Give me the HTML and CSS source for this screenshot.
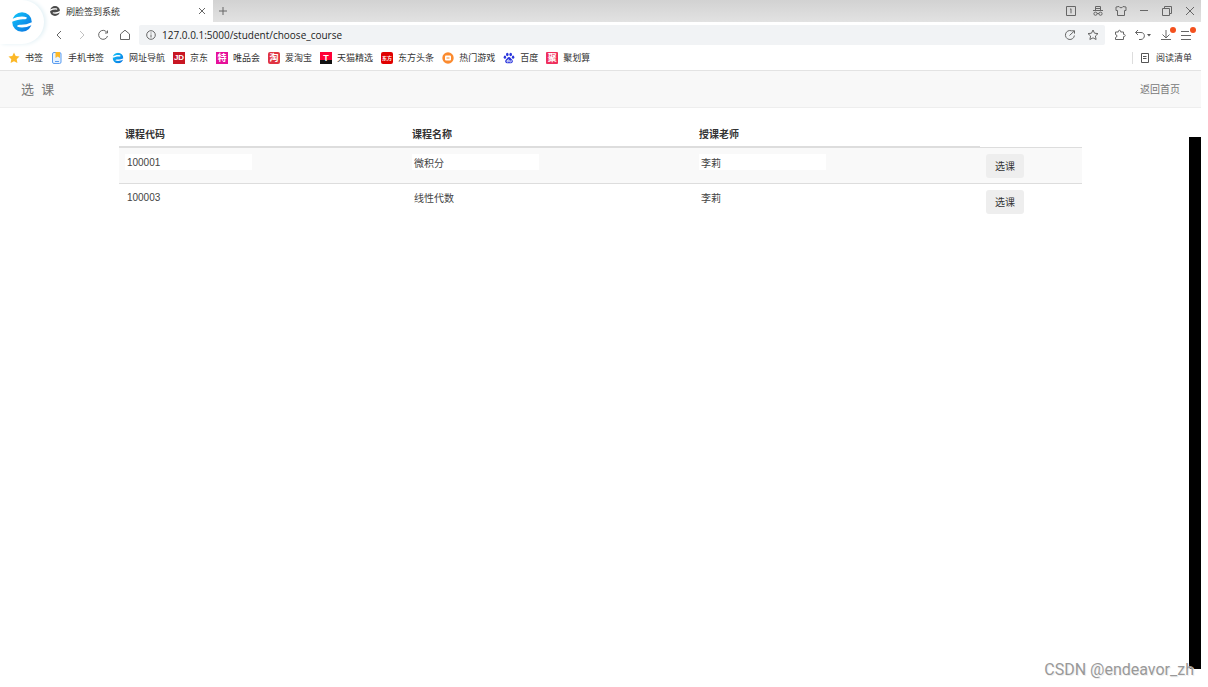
FILE: index.html
```html
<!DOCTYPE html>
<html lang="zh-CN">
<head>
    <meta charset="UTF-8">
    <meta name="viewport" content="width=device-width, initial-scale=1.0">
    <title>刷脸签到系统</title>
    <link rel="stylesheet" href="styles.css">
</head>
<body>
    <!-- shared browser logo -->
    <svg class="defs" width="0" height="0" aria-hidden="true">
        <defs>
            <linearGradient id="blue" x1="0" y1="0" x2="1" y2="1">
                <stop offset="0" stop-color="#12c8fa"/>
                <stop offset="1" stop-color="#0b6fe0"/>
            </linearGradient>
            <symbol id="logo" viewBox="0 0 20 20">
                <circle cx="10" cy="10" r="9.800"/>
                <path fill="#fff" d="M-1 10.200V7.500C5 4.300 11 3.800 14.500 5.300c.8 1-.2 1.800-2 2C8 7 4 8 -1 10.200z"/>
                <path fill="#fff" d="M21 9.800v2.700C15 15.700 9 16.200 5.500 14.700c-.8-1 .2-1.800 2-2C12 13 16 12 21 9.800z"/>
            </symbol>
        </defs>
    </svg>

    <div class="browser">
        <header class="chrome">
            <div class="logo">
                <svg width="20" height="20" fill="url(#blue)"><use href="#logo"/></svg>
            </div>
            <div class="tabs">
                <div class="tab">
                    <svg width="10" height="10" fill="#4a4a4a"><use href="#logo"/></svg>
                    <span class="tab-title">刷脸签到系统</span>
                    <button class="icon-btn" aria-label="关闭标签">
                        <svg width="8" height="8" viewBox="0 0 8 8"><path d="M1 1l6 6M7 1L1 7"/></svg>
                    </button>
                </div>
                <button class="icon-btn new-tab" aria-label="新标签">
                    <svg width="10" height="10" viewBox="0 0 10 10"><path d="M5 1v8M1 5h8"/></svg>
                </button>
                <div class="window-tools">
                    <button class="icon-btn" aria-label="窗口">
                        <svg width="12" height="12" viewBox="0 0 12 12"><path d="M1.500 1.500h9v9h-9zM5 4.500l1-.8v4.600"/></svg>
                    </button>
                    <button class="icon-btn" aria-label="无痕">
                        <svg width="12" height="12" viewBox="0 0 12 12"><path d="M3.500 5V1.500h5V5M1 5.500h10M3.500 3.500h5"/><circle cx="3.500" cy="8.700" r="1.600"/><circle cx="8.500" cy="8.700" r="1.600"/><path d="M5 8.500h2"/></svg>
                    </button>
                    <button class="icon-btn" aria-label="皮肤">
                        <svg width="12" height="12" viewBox="0 0 12 12"><path d="M4 1.500L1 2v3.500h1.500V10.500h7V5.500H11V2L8 1.500C7.500 3.200 4.500 3.200 4 1.500z"/></svg>
                    </button>
                    <button class="icon-btn" aria-label="最小化">
                        <svg width="12" height="12" viewBox="0 0 12 12"><path d="M2 5.500h8"/></svg>
                    </button>
                    <button class="icon-btn" aria-label="还原">
                        <svg width="12" height="12" viewBox="0 0 12 12"><path d="M1.500 3.500h7v7h-7zM3.500 3.500v-2h7v7h-2"/></svg>
                    </button>
                    <button class="icon-btn" aria-label="关闭">
                        <svg width="12" height="12" viewBox="0 0 12 12"><path d="M2 2l8 8M10 2l-8 8"/></svg>
                    </button>
                </div>
            </div>
            <div class="toolbar">
                <div class="nav-tools">
                    <button class="icon-btn" aria-label="后退">
                        <svg width="12" height="12" viewBox="0 0 12 12"><path d="M8 2L4 6l4 4"/></svg>
                    </button>
                    <button class="icon-btn muted" aria-label="前进">
                        <svg width="12" height="12" viewBox="0 0 12 12"><path d="M5 2l4 4-4 4"/></svg>
                    </button>
                    <button class="icon-btn" aria-label="刷新">
                        <svg width="12" height="12" viewBox="0 0 12 12"><path d="M10 3.500A4.500 4.500 0 1 0 10.500 7M10.500 1.500v2.500H8"/></svg>
                    </button>
                    <button class="icon-btn" aria-label="主页">
                        <svg width="12" height="12" viewBox="0 0 12 12"><path d="M1.500 5L6 1.200 10.500 5v5.500h-9z"/></svg>
                    </button>
                </div>
                <div class="address">
                    <svg width="10" height="10" viewBox="0 0 10 10"><circle cx="5" cy="5" r="4.300"/><path d="M5 4.500v3M5 2.500v1"/></svg>
                    <input type="text" class="url" aria-label="地址" value="127.0.0.1:5000/student/choose_course">
                    <button class="icon-btn" aria-label="重新加载">
                        <svg width="12" height="12" viewBox="0 0 12 12"><path d="M7.500 1.800A4.500 4.500 0 1 0 10.400 6.500M5.500 6.500L10.300 2M7.500 1.800h3v2.800"/></svg>
                    </button>
                    <button class="icon-btn" aria-label="收藏">
                        <svg width="12" height="12" viewBox="0 0 12 12"><path d="M6 1l1.500 3.200 3.500.4-2.600 2.400.7 3.500L6 8.800l-3.100 1.700.7-3.500L1 4.600l3.500-.4z"/></svg>
                    </button>
                </div>
                <div class="side-tools">
                    <button class="icon-btn" aria-label="扩展">
                        <svg width="12" height="12" viewBox="0 0 12 12"><path d="M1.500 3h2.800c-.6-2.300 3-2.300 2.400 0h2.800v2.300c2.300-.3 2.300 2.700 0 2.400v2.800h-8V8.500c1.900 0 1.900-3 0-3z"/></svg>
                    </button>
                    <button class="icon-btn" aria-label="撤销">
                        <svg width="18" height="12" viewBox="0 0 18 12"><path d="M4 1L1.500 3.500 4 6M1.500 3.500H7c4.500 0 4.500 6.500 0 7H5"/><path class="solid" d="M13 5h4l-2 2.500z"/></svg>
                    </button>
                    <button class="icon-btn" aria-label="下载">
                        <svg width="12" height="12" viewBox="0 0 12 12"><path d="M6 1v8M2.500 5.500L6 9l3.500-3.500M1 10.500h10"/></svg>
                        <span class="dot"></span>
                    </button>
                    <button class="icon-btn" aria-label="菜单">
                        <svg width="12" height="12" viewBox="0 0 12 12"><path d="M1 2.500h8M1 6.500h10M1 10.500h10"/></svg>
                        <span class="dot"></span>
                    </button>
                </div>
            </div>
        </header>

        <nav class="bookmarks">
            <a href="#">
                <svg width="12" height="12" viewBox="0 0 12 12"><path fill="#fcb827" d="M6 .5l1.700 3.500 3.800.5L8.700 7.200l.7 3.900L6 9.200l-3.400 1.900.7-3.900L.5 4.500 4.300 4z"/></svg>
                书签
            </a>
            <a href="#">
                <svg width="12" height="12" viewBox="0 0 12 12"><rect x="1.500" y=".5" width="8.500" height="11" rx="1.500" fill="#e6f2ff" stroke="#5b9df0"/><path fill="#fcb827" d="M4.500 0H9v6L6.800 4.500 4.500 6z"/><path stroke="#5b9df0" d="M4 9.500h4"/></svg>
                手机书签
            </a>
            <a href="#">
                <svg width="12" height="12" viewBox="-1 -1 22 22" fill="url(#blue)"><use href="#logo" width="20" height="20"/></svg>
                网址导航
            </a>
            <a href="#"><span class="mark jd">JD</span>京东</a>
            <a href="#"><span class="mark vip">特</span>唯品会</a>
            <a href="#"><span class="mark tao">淘</span>爱淘宝</a>
            <a href="#"><span class="mark tmall">T</span>天猫精选</a>
            <a href="#"><span class="mark east">东方</span>东方头条</a>
            <a href="#">
                <svg width="12" height="12" viewBox="0 0 12 12"><circle cx="6" cy="6" r="5.700" fill="#fb8a2e"/><rect x="3" y="3.500" width="6" height="5" rx="1" fill="#fff"/><path stroke="#fb8a2e" d="M4.500 6h3"/></svg>
                热门游戏
            </a>
            <a href="#">
                <svg width="12" height="12" viewBox="0 0 12 12" fill="#2b36dc"><ellipse cx="4.300" cy="2.500" rx="1.300" ry="1.800"/><ellipse cx="7.700" cy="2.500" rx="1.300" ry="1.800"/><ellipse cx="1.900" cy="5.200" rx="1.200" ry="1.600"/><ellipse cx="10.100" cy="5.200" rx="1.200" ry="1.600"/><path d="M6 5c1.300 0 2 1.500 3 2.500 1.700 1.700.6 4-1.200 3.800-1.400-.2-2.200-.2-3.600 0C2.400 11.500 1.300 9.200 3 7.500 4 6.500 4.700 5 6 5z"/><path fill="none" stroke="#fff" stroke-width=".7" d="M5.300 7v3H4V8.500h1.300M6.700 8v2h1.500V8"/></svg>
                百度
            </a>
            <a href="#"><span class="mark ju">聚</span>聚划算</a>
            <a href="#" class="reading">
                <svg width="12" height="12" viewBox="0 0 12 12" fill="none" stroke="#555"><path d="M2.500 1.500h7v9h-7zM4 4.500h3.500M4 6.500h3.500"/></svg>
                阅读清单
            </a>
        </nav>

        <main class="page">
            <div class="navbar">
                <a href="#" class="brand">选&nbsp;&nbsp;课</a>
                <a href="#" class="home">返回首页</a>
            </div>
            <div class="container">
                <table class="courses">
                    <colgroup>
                        <col class="field"><col class="field"><col class="field"><col>
                    </colgroup>
                    <thead>
                        <tr>
                            <th>课程代码</th>
                            <th>课程名称</th>
                            <th>授课老师</th>
                        </tr>
                    </thead>
                    <tbody>
                        <tr>
                            <td><input type="text" aria-label="课程代码" value="100001" readonly></td>
                            <td><input type="text" aria-label="课程名称" value="微积分" readonly></td>
                            <td><input type="text" aria-label="授课老师" value="李莉" readonly></td>
                            <td><button class="btn">选课</button></td>
                        </tr>
                        <tr>
                            <td><input type="text" aria-label="课程代码" value="100003" readonly></td>
                            <td><input type="text" aria-label="课程名称" value="线性代数" readonly></td>
                            <td><input type="text" aria-label="授课老师" value="李莉" readonly></td>
                            <td><button class="btn">选课</button></td>
                        </tr>
                    </tbody>
                </table>
            </div>
            <div class="side-strip"></div>
        </main>
        <div class="watermark">CSDN @endeavor_zh</div>
    </div>
</body>
</html>
```

FILE: styles.css
```css
* {
    box-sizing: border-box;
}
body {
    margin: 0;
    background: #fff;
    color: #333;
    font-family: "Liberation Sans", "Noto Sans CJK SC", sans-serif;
    font-size: 10px;
}
a {
    color: inherit;
    text-decoration: none;
}
button,
input {
    font: inherit;
    color: inherit;
    border: none;
    padding: 0;
}
svg {
    display: block;
    flex: none;
}
.defs {
    position: absolute;
}
.browser {
    position: relative;
    display: flex;
    flex-direction: column;
    min-height: 100vh;
    margin-right: 7px;
}

/* browser top */
.chrome {
    display: grid;
    grid-template-columns: 44px 1fr;
    grid-template-rows: 22px 26px;
}
.logo {
    grid-row: span 2;
    display: flex;
    align-items: center;
    justify-content: center;
    height: 44px;
    border-radius: 0 22px 22px 0;
    box-shadow: 2px 0 4px #e2f0f5;
}
.tabs {
    display: flex;
    align-items: stretch;
    background: linear-gradient(#d2d2d2, #e2e2e2);
}
.tab {
    display: flex;
    align-items: center;
    gap: 6px;
    width: 169px;
    padding: 0 7px 0 6px;
    background: #fff;
    font-size: 9px;
}
.logo {
    position: relative;
}
.tab-title {
    flex: 1;
}
.icon-btn {
    position: relative;
    display: flex;
    align-items: center;
    justify-content: center;
    background: none;
    cursor: pointer;
}
.icon-btn svg,
.address svg {
    fill: none;
    stroke: #666;
    stroke-width: 1;
}
.icon-btn .solid {
    fill: #555;
    stroke: none;
}
.muted {
    opacity: 0.4;
}
.new-tab {
    width: 20px;
}
.window-tools {
    display: flex;
    gap: 11px;
    margin-left: auto;
    padding-right: 5px;
}
.window-tools .icon-btn:first-child {
    margin-right: 4px;
}
.toolbar {
    display: flex;
    align-items: center;
}
.nav-tools {
    display: flex;
    gap: 10px;
    padding: 0 8px 0 9px;
}
.address {
    flex: 1;
    display: flex;
    align-items: center;
    gap: 11px;
    height: 20px;
    padding: 0 6px 0 7px;
    border-radius: 2px;
    background: #f1f3f5;
}
.url {
    flex: 1;
    margin-left: -5px;
    background: none;
    outline: none;
    color: #222;
    font-family: "Open Sans", sans-serif;
}
.side-tools {
    display: flex;
    gap: 8px;
    padding: 0 9px;
}
.dot {
    position: absolute;
    top: -2px;
    right: -4px;
    width: 6px;
    height: 6px;
    border-radius: 50%;
    background: #f4511e;
}

/* bookmarks */
.bookmarks {
    display: flex;
    gap: 8px;
    height: 22px;
    padding: 0 9px 2px 8px;
    font-size: 9px;
    line-height: 12px;
    white-space: nowrap;
}
.bookmarks a {
    display: flex;
    align-items: center;
    gap: 5px;
}
.mark {
    display: flex;
    align-items: center;
    justify-content: center;
    width: 12px;
    height: 12px;
    overflow: hidden;
    color: #fff;
    font-weight: bold;
}
.jd {
    background: #c81623;
    font-size: 8px;
}
.vip {
    background: #e6109a;
}
.tao {
    border-radius: 2px;
    background: #e03442;
}
.tmall {
    background: linear-gradient(#ff0036 70%, #111 70%);
}
.east {
    border-radius: 2px;
    background: #e00000;
    font-size: 5px;
}
.ju {
    border-radius: 1px;
    background: #ef2f5c;
}
.bookmarks .reading {
    align-self: center;
    margin-left: auto;
    padding-left: 6px;
    border-left: 1px solid #ddd;
}

/* page */
.page {
    position: relative;
    flex: 1;
}
.navbar {
    display: flex;
    align-items: center;
    justify-content: space-between;
    height: 38px;
    padding: 0 21px 2px;
    border-top: 1px solid #e3e3e3;
    border-bottom: 1px solid #eee;
    background: #f8f8f8;
    color: #777;
}
.brand {
    font-size: 13px;
}
.container {
    width: 80.2%;
    margin: 0 auto;
    padding-top: 14px;
}
.courses {
    width: 100%;
    table-layout: fixed;
    border-collapse: collapse;
}
.field {
    width: 29.8%;
}
.courses th {
    padding: 6px 6px 4px;
    border-bottom: 2px solid #ddd;
    line-height: 14px;
    text-align: left;
}
.courses td {
    height: 36px;
    padding: 6px 6px 5px;
    border-top: 1px solid #ddd;
    vertical-align: top;
}
.courses tbody tr:nth-child(odd) {
    background: #f9f9f9;
}
.courses input {
    display: block;
    width: 127px;
    height: 16px;
    padding: 0 2px;
    background: #fff;
    color: #444;
}
.btn {
    display: block;
    height: 24px;
    padding: 0 9px;
    border-radius: 3px;
    background: #eee;
    cursor: pointer;
}
.side-strip {
    position: absolute;
    top: 67px;
    right: 0;
    bottom: 18px;
    width: 12px;
    background: #000;
}
.watermark {
    position: absolute;
    right: 7px;
    bottom: 7px;
    color: #999;
    font-family: Roboto, sans-serif;
    font-size: 16px;
    line-height: 20px;
    text-shadow: 1px 1px 0 #eee;
}
```
